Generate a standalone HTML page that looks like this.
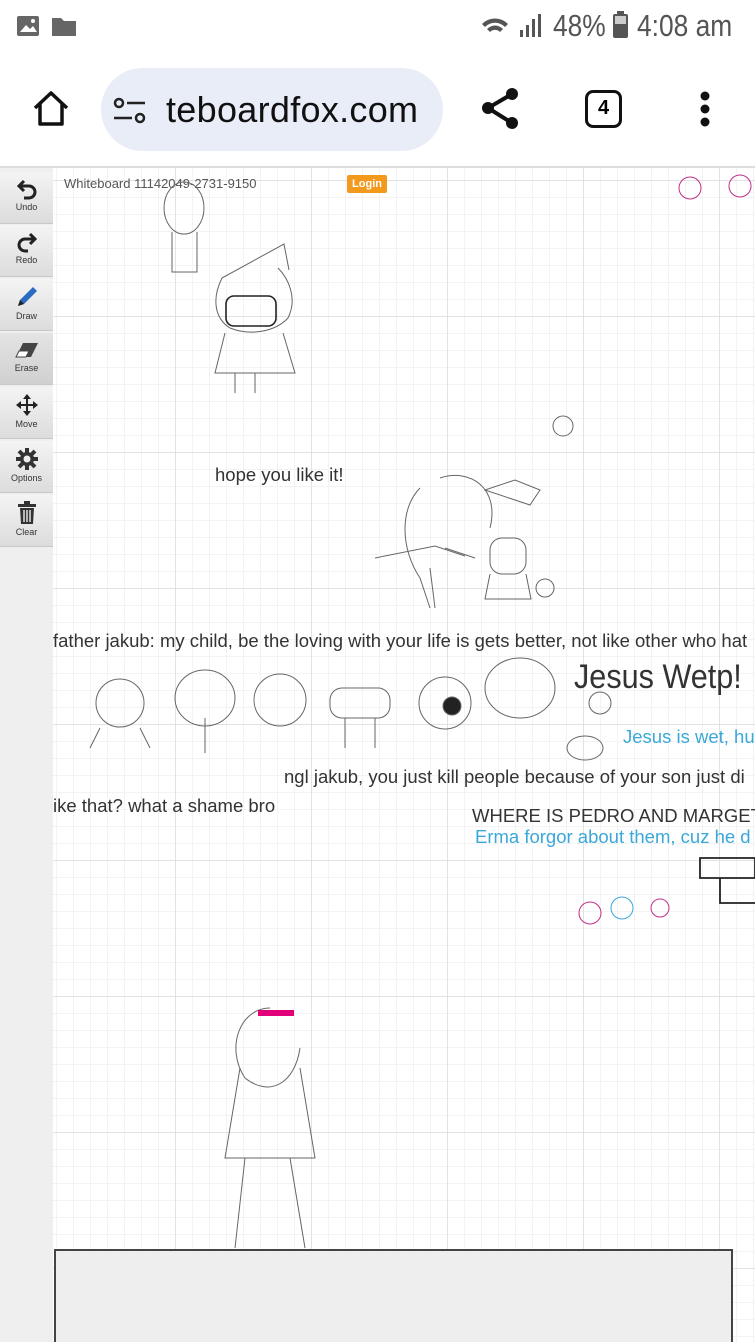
<!DOCTYPE html>
<html><head><meta charset="utf-8"><style>
*{margin:0;padding:0;box-sizing:border-box}
body{width:755px;height:1342px;overflow:hidden;background:#fff;font-family:"Liberation Sans",sans-serif;position:relative}
.abs{position:absolute}
#canvas{position:absolute;left:0;top:168px;width:755px;height:1174px;
background-color:#fff;
background-image:
linear-gradient(to right,#e2e2e2 1px,transparent 1px),
linear-gradient(to bottom,#e2e2e2 1px,transparent 1px),
linear-gradient(to right,#f3f3f3 1px,transparent 1px),
linear-gradient(to bottom,#f3f3f3 1px,transparent 1px);
background-size:136px 136px,136px 136px,17px 17px,17px 17px;
background-position:39px 12px,39px 12px,39px 12px,39px 12px;}
.side{position:absolute;left:0;top:168px;width:53px;height:1174px;background:#efefef}
.btn{position:absolute;left:0;width:53px;height:52px;background:linear-gradient(#f4f4f4,#dcdcdc);border-bottom:1px solid #c8c8c8;text-align:center;font-size:9px;color:#333}
.btn svg{display:block;margin:6px auto 2px}
.t{position:absolute;font-size:18.5px;color:#333;white-space:nowrap}
.b{color:#3aa8d8}
.cond{transform-origin:left top;transform:scaleX(0.85)}
</style></head><body>
<svg class="abs" style="left:16px;top:14px" width="66" height="24"><rect x="1" y="2" width="22" height="20" fill="#666" rx="2"/><path d="M4 18l6-7 4 4 3-3 4 6z" fill="#fff"/><circle cx="17" cy="7" r="2" fill="#fff"/><path d="M36 4h9l3 3h12v15H36z" fill="#666"/></svg>
<svg class="abs" style="left:478px;top:12px" width="70" height="28"><path d="M4 12a18 18 0 0 1 26 0l-3 3a14 14 0 0 0-20 0zM9 17a11 11 0 0 1 16 0l-3 3a7 7 0 0 0-10 0z" fill="#555"/><rect x="42" y="18" width="3" height="7" fill="#555"/><rect x="48" y="13" width="3" height="12" fill="#555"/><rect x="54" y="7" width="3" height="18" fill="#555"/><rect x="60" y="2" width="3" height="23" fill="#555"/></svg>
<div class="abs cond" style="left:553px;top:8px;font-size:31px;color:#555">48%</div>
<svg class="abs" style="left:612px;top:11px" width="18" height="28"><rect x="5" y="0" width="7" height="3" fill="#555"/><rect x="1" y="3" width="15" height="24" rx="2" fill="#555"/><rect x="3" y="5" width="11" height="8" fill="#ccc"/></svg>
<div class="abs cond" style="left:637px;top:8px;font-size:31px;color:#555">4:08 am</div>
<svg class="abs" style="left:30px;top:88px" width="42" height="42"><path d="M5 20L21 5l16 15M10 16v20h22V16" fill="none" stroke="#111" stroke-width="3.5" stroke-linejoin="round"/></svg>
<div class="abs" style="left:101px;top:68px;width:342px;height:83px;border-radius:42px;background:#e9edf7"></div>
<svg class="abs" style="left:112px;top:96px" width="36" height="30"><circle cx="7" cy="7" r="4" fill="none" stroke="#222" stroke-width="2.5"/><path d="M15 7h18M2 22h18" stroke="#222" stroke-width="2.5"/><circle cx="28" cy="22" r="4" fill="none" stroke="#222" stroke-width="2.5"/></svg>
<div class="abs" style="left:166px;top:89px;font-size:36px;color:#111;letter-spacing:0.3px">teboardfox.com</div>
<svg class="abs" style="left:478px;top:86px" width="44" height="46"><path d="M34 8L10 22l24 15" fill="none" stroke="#111" stroke-width="4"/><circle cx="34" cy="8" r="6" fill="#111"/><circle cx="10" cy="22" r="6" fill="#111"/><circle cx="34" cy="37" r="6" fill="#111"/></svg>
<div class="abs" style="left:585px;top:90px;width:37px;height:38px;border:3.5px solid #111;border-radius:8px;font-size:20px;font-weight:bold;text-align:center;line-height:31px">4</div>
<svg class="abs" style="left:695px;top:90px" width="20" height="40"><circle cx="10" cy="6" r="4.5" fill="#111"/><circle cx="10" cy="19" r="4.5" fill="#111"/><circle cx="10" cy="32" r="4.5" fill="#111"/></svg>
<div class="abs" style="left:0;top:166px;width:755px;height:2px;background:#ddd"></div>
<div id="canvas"></div>
<div class="abs" style="left:64px;top:176px;font-size:13px;color:#555">Whiteboard 11142049-2731-9150</div>
<div class="abs" style="left:347px;top:175px;width:40px;height:18px;background:#f39a1e;color:#fff;font-size:11px;font-weight:bold;text-align:center;line-height:18px;border-radius:2px">Login</div>
<svg class="abs" style="left:0;top:168px" width="755" height="1090">
<g fill="none" stroke="#666" stroke-width="1">
<ellipse cx="184" cy="40" rx="20" ry="26"/><path d="M172 64v40h25V64"/>
<path d="M222 110l62-34 5 26M222 110c-10 20-8 40 8 50 20 8 45 4 58-10 10-20 0-40-10-50"/><rect x="226" y="128" width="50" height="30" rx="8" stroke="#222" stroke-width="1.6"/><path d="M225 165l-10 40h80l-12-40M235 205v20M255 205v20"/>
<circle cx="563" cy="258" r="10"/>
<path d="M420 320c-20 20-20 60 0 90l10 30M440 310c30-10 60 10 50 50M375 390l60-12 30 10M445 380l30 10M430 400l5 40"/><rect x="490" y="370" width="36" height="36" rx="12"/><path d="M490 406l-5 25h46l-5-25"/><circle cx="545" cy="420" r="9"/><path d="M485 322l30-10 25 10-10 15z"/>
<g transform="translate(0,490)">
<circle cx="120" cy="45" r="24"/><path d="M100 70l-10 20M140 70l10 20"/>
<ellipse cx="205" cy="40" rx="30" ry="28"/><path d="M205 60v35"/>
<circle cx="280" cy="42" r="26"/>
<rect x="330" y="30" width="60" height="30" rx="12"/><path d="M345 60v30M375 60v30"/>
<circle cx="445" cy="45" r="26"/><circle cx="452" cy="48" r="9" fill="#222"/>
<ellipse cx="520" cy="30" rx="35" ry="30"/><circle cx="600" cy="45" r="11"/><ellipse cx="585" cy="90" rx="18" ry="12"/>
</g>
<path d="M270 840c-30 0-45 40-25 70 25 20 50 5 55-30M240 900l-15 90 90 0-15-90M245 990l-10 90M290 990l15 90" />
</g>
<path d="M700 690h55v20h-55z M720 710v25h35" fill="none" stroke="#222" stroke-width="1.8"/>
<g fill="none" stroke="#c22e8a" stroke-width="1"><circle cx="690" cy="20" r="11"/><circle cx="740" cy="18" r="11"/><circle cx="590" cy="745" r="11"/><circle cx="660" cy="740" r="9"/></g>
<g fill="none" stroke="#3aa8d8" stroke-width="1"><circle cx="622" cy="740" r="11"/></g>
<g fill="#e2007a"><rect x="258" y="842" width="36" height="6"/></g>
</svg>
<div class="t" style="left:215px;top:464px">hope you like it!</div>
<div class="t" style="left:53px;top:630px">father jakub: my child, be the loving with your life is gets better, not like other who hat</div>
<div class="t" style="left:574px;top:658px;font-size:34px;color:#333;transform:scaleX(0.9);transform-origin:left top">Jesus Wetp!</div>
<div class="t b" style="left:623px;top:726px">Jesus is wet, hu</div>
<div class="t" style="left:284px;top:766px">ngl jakub, you just kill people because of your son just di</div>
<div class="t" style="left:53px;top:795px">ike that? what a shame bro</div>
<div class="t" style="left:472px;top:805px">WHERE IS PEDRO AND MARGET T</div>
<div class="t b" style="left:475px;top:826px">Erma forgor about them, cuz he d</div>
<div class="side"></div>
<div class="btn" style="top:172px"><svg width="22" height="22"><path d="M8 3L3 8l5 5M3 8h10a6 6 0 0 1 0 12H8" fill="none" stroke="#222" stroke-width="3"/></svg>Undo</div>
<div class="btn" style="top:225px"><svg width="22" height="22"><path d="M14 3l5 5-5 5M19 8H9a6 6 0 0 0 0 12h3" fill="none" stroke="#222" stroke-width="3"/></svg>Redo</div>
<div class="btn" style="top:279px"><svg width="24" height="24"><path d="M3 21l2-6L18 2l4 4L9 19z" fill="#2a6ac0"/><path d="M3 21l2-6 4 4z" fill="#222"/></svg>Draw</div>
<div class="btn" style="top:333px;background:linear-gradient(#e4e4e4,#d0d0d0)"><svg width="24" height="22"><path d="M8 4h15l-7 14H1z" fill="#444"/><path d="M1 18l3-6h10l-3 6z" fill="#fff" stroke="#444"/></svg>Erase</div>
<div class="btn" style="top:387px"><svg width="24" height="24"><path d="M12 1l4 5h-3v5h5V8l5 4-5 4v-3h-5v5h3l-4 5-4-5h3v-5H6v3l-5-4 5-4v3h5V6H8z" fill="#222"/></svg>Move</div>
<div class="btn" style="top:441px"><svg width="24" height="24"><circle cx="12" cy="12" r="7" fill="#333"/><g stroke="#333" stroke-width="4"><path d="M12 1v22M1 12h22M4 4l16 16M20 4L4 20"/></g><circle cx="12" cy="12" r="3.5" fill="#eee"/></svg>Options</div>
<div class="btn" style="top:495px"><svg width="22" height="24"><rect x="2" y="3" width="18" height="3" fill="#333"/><rect x="8" y="0" width="6" height="3" fill="#333"/><path d="M4 7h14l-1 16H5z" fill="#333"/><path d="M8 9v12M11 9v12M14 9v12" stroke="#eee" stroke-width="1.4"/></svg>Clear</div>
<div class="abs" style="left:54px;top:1249px;width:679px;height:93px;background:#eee;border:2px solid #444;border-bottom:none"></div>
</body></html>
